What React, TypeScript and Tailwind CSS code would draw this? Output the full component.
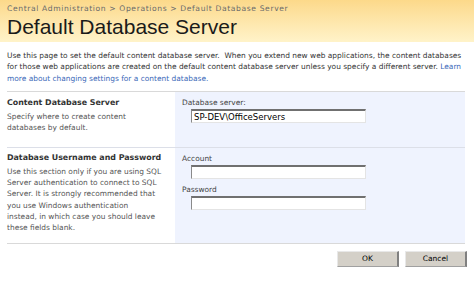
import React from "react";

const body = { fontFamily: '"DejaVu Sans", Verdana, sans-serif' };

const Input = ({ value = "" }: { value?: string }) => (
  <div
    className="h-[14px] w-[175px] bg-white border-t-2 border-l border-t-[#707070] border-l-[#8a8a8a] border-r border-b border-r-[#e4e4e4] border-b-[#e4e4e4] pl-[2px] text-[8.5px] leading-[12px] text-black"
    style={body}
  >
    {value}
  </div>
);

const Button = ({ label }: { label: string }) => (
  <div
    className="h-[16px] w-[62px] bg-[#d4d0c8] border-r-2 border-b border-r-[#808080] border-b-[#a0a0a0] border-t border-l border-t-[#e8e8e8] border-l-[#e8e8e8] flex items-center justify-center text-[7.5px] text-black"
    style={body}
  >
    {label}
  </div>
);

export default function App() {
  return (
    <div
      className="w-[474px] h-[293px] bg-white overflow-hidden text-[#333]"
      style={body}
    >
      <div className="h-[42px] bg-gradient-to-b from-[#fcd98a] to-[#fff3c9] px-[7px] pt-[4px]">
        <div className="text-[7.6px] leading-[10px] tracking-[0.62px] text-[#6a6a6a]">
          Central Administration &gt; Operations &gt; Default Database Server
        </div>
        <div
          className="text-[21px] leading-[24px] text-[#1a1a1a] mt-[1px]"
          style={{ fontFamily: '"Liberation Sans", Arial, sans-serif' }}
        >
          Default Database Server
        </div>
      </div>

      <div className="pl-[7px] pt-[8px] text-[7.45px] leading-[11.3px] text-[#333] whitespace-nowrap">
        Use this page to set the default content database server.&nbsp; When you extend new web applications, the content databases
        <br />
        for those web applications are created on the default content database server unless you specify a different server.{" "}
        <span className="text-[#3a68b8]">Learn</span>
        <br />
        <span className="text-[#3a68b8]">more about changing settings for a content database.</span>
      </div>

      <div className="mx-[7px] mt-[7px] w-[458px] border-b border-[#d9d9d9]">
        <div className="flex border-t border-[#d9d9d9]">
          <div className="w-[168px] pt-[5px] h-[55px]">
            <div className="font-bold text-[7.9px] leading-[11px] text-[#333]">Content Database Server</div>
            <div className="whitespace-nowrap text-[7.45px] leading-[11.3px] text-[#555] mt-[3px]">
              Specify where to create content
              <br />
              databases by default.
            </div>
          </div>
          <div className="flex-1 bg-[#eff3fe] pl-[7px] pt-[6px] h-[55px]">
            <div className="text-[7.45px] leading-[10px] text-[#444]">Database server:</div>
            <div className="ml-[9px] mt-[1px]">
              <Input value="SP-DEV\OfficeServers" />
            </div>
          </div>
        </div>
        <div className="flex border-t border-[#dcdfe8]">
          <div className="w-[168px] pt-[4px] h-[95px]">
            <div className="font-bold text-[7.9px] leading-[11px] text-[#333]">Database Username and Password</div>
            <div className="whitespace-nowrap text-[7.45px] leading-[11.3px] text-[#555] mt-[3px]">
              Use this section only if you are using SQL
              <br />
              Server authentication to connect to SQL
              <br />
              Server. It is strongly recommended that
              <br />
              you use Windows authentication
              <br />
              instead, in which case you should leave
              <br />
              these fields blank.
            </div>
          </div>
          <div className="flex-1 bg-[#eff3fe] pl-[7px] pt-[6px]">
            <div className="text-[7.45px] leading-[10px] text-[#444]">Account</div>
            <div className="ml-[9px] mt-[1px]">
              <Input />
            </div>
            <div className="text-[7.45px] leading-[10px] text-[#444] mt-[6px]">Password</div>
            <div className="ml-[9px] mt-[1px]">
              <Input />
            </div>
          </div>
        </div>
      </div>

      <div className="flex justify-end gap-[6px] pr-[7px] mt-[7px]">
        <Button label="OK" />
        <Button label="Cancel" />
      </div>
    </div>
  );
}
